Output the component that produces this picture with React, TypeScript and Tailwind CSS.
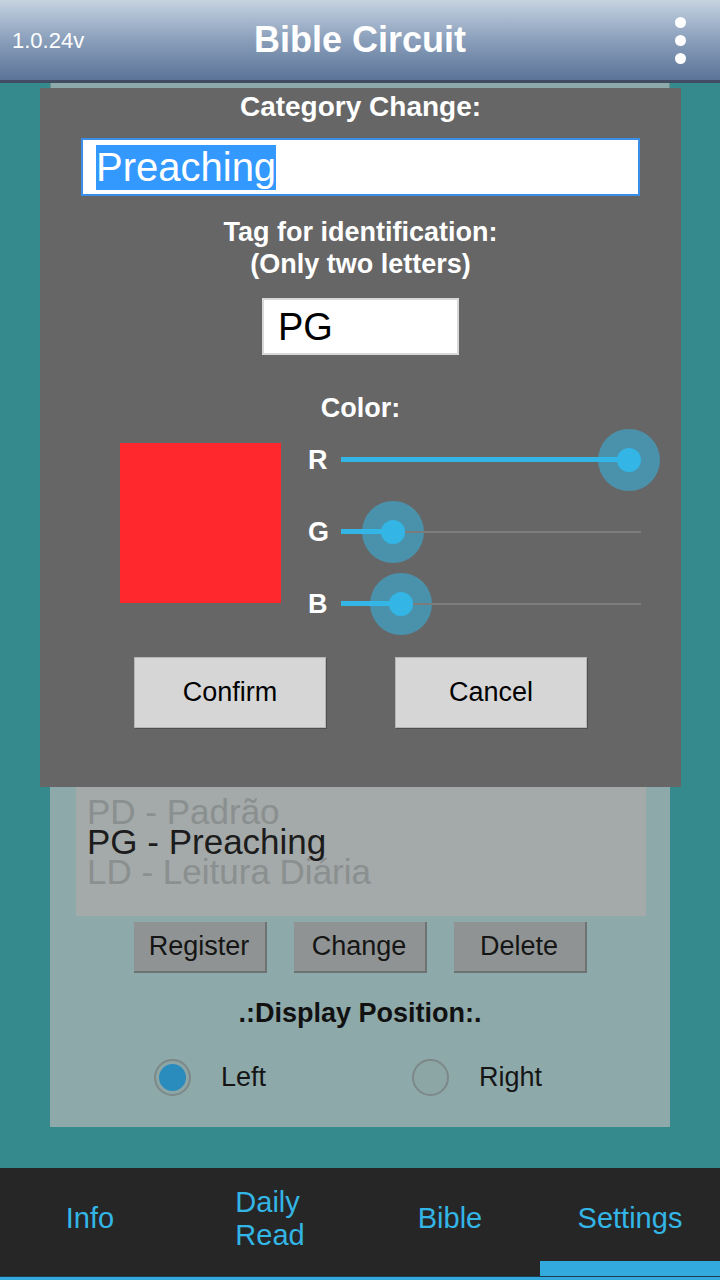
import React from "react";

type SliderProps = { label: string; value: number };

// Holo-style slider: halo behind, then track, then the dot
function ColorSlider(props: SliderProps) {
  return (
    <div className="flex h-[72px] items-center">
      <span className="w-[33px] text-[27px] font-bold text-white">{props.label}</span>
      <div className="relative h-[62px] w-[300px]">
        <div
          className="absolute top-[0px] h-[62px] w-[62px] -translate-x-1/2 rounded-full bg-[#4a92ac]"
          style={{ left: props.value }}
        />
        <div className="absolute left-0 right-0 top-[30px] h-[2px] bg-[#7c7c7c]" />
        <div className="absolute left-0 top-[28px] h-[5px] bg-[#33b5e5]" style={{ width: props.value }} />
        <div
          className="absolute top-[19px] h-[24px] w-[24px] -translate-x-1/2 rounded-full bg-[#33b5e5]"
          style={{ left: props.value }}
        />
      </div>
    </div>
  );
}

function CategoryDialog() {
  return (
    <div className="absolute left-[40px] top-[5px] flex h-[699px] w-[641px] flex-col items-center bg-[#666666] pt-[3px]">
      <p className="text-[28px] font-bold leading-[32px] text-white">Category Change:</p>
      <div className="mt-[15px] flex h-[58px] w-[559px] items-center border-2 border-[#3b8ee8] bg-white px-[13px]">
        <span className="bg-[#3399ff] text-[40px] leading-[45px] text-white">Preaching</span>
      </div>
      <p className="mt-[20px] text-center text-[27px] font-bold leading-[32px] text-white">
        Tag for identification:
        <br />
        (Only two letters)
      </p>
      <div className="mt-[18px] flex h-[57px] w-[197px] items-center border-2 border-[#d8d8d8] bg-white px-[14px]">
        <span className="text-[38px] leading-none text-black">PG</span>
      </div>
      <p className="mt-[37px] text-[27px] font-bold leading-[32px] text-white">Color:</p>
      <div className="flex self-stretch pl-[80px]">
        <div className="mt-[19px] h-[160px] w-[161px] bg-[#ff282d]" />
        <div className="ml-[27px] flex flex-col">
          <ColorSlider label="R" value={288} />
          <ColorSlider label="G" value={52} />
          <ColorSlider label="B" value={60} />
        </div>
      </div>
      <div className="mt-[17px] flex gap-[69px]">
        <button className="h-[71px] w-[192px] border border-[#b5b5b5] bg-[#d6d6d6] text-[27px] text-black shadow-[1px_1px_0_#4f4f4f]">
          Confirm
        </button>
        <button className="h-[71px] w-[192px] border border-[#b5b5b5] bg-[#d6d6d6] text-[27px] text-black shadow-[1px_1px_0_#4f4f4f]">
          Cancel
        </button>
      </div>
    </div>
  );
}

function PanelButton(props: { children: React.ReactNode }) {
  return (
    <button className="h-[51px] w-[133px] border-b-2 border-r-2 border-[#6d7272] bg-[#8f9393] text-[27px] text-[#151515]">
      {props.children}
    </button>
  );
}

function Radio(props: { label: string; checked: boolean }) {
  return (
    <div className="flex w-[261px] items-center gap-[30px]">
      <div className="flex h-[37px] w-[37px] items-center justify-center rounded-full border-2 border-[#7d8888] bg-[#8ca6a6]">
        {props.checked && <div className="h-[27px] w-[27px] rounded-full bg-[#2a8bbd]" />}
      </div>
      <span className="text-[27px] text-[#151515]">{props.label}</span>
    </div>
  );
}

export default function App() {
  const tabs = ["Info", "Daily\nRead", "Bible", "Settings"];
  return (
    <div className="flex h-[1280px] w-[720px] flex-col overflow-hidden bg-[#358a8e] font-['Liberation_Sans',Arial,sans-serif]">
      <header className="flex h-[83px] shrink-0 items-center border-b-[3px] border-[#3f4c62] bg-gradient-to-b from-[#c6d3e1] via-[#8a9fbb] to-[#5b7397] px-[12px]">
        <span className="w-[150px] text-[22px] text-white">1.0.24v</span>
        <h1 className="flex-1 text-center text-[36px] font-bold text-white">Bible Circuit</h1>
        <div className="flex w-[150px] flex-col items-end gap-[7px] pr-[22px]">
          <span className="h-[11px] w-[11px] rounded-full bg-white" />
          <span className="h-[11px] w-[11px] rounded-full bg-white" />
          <span className="h-[11px] w-[11px] rounded-full bg-white" />
        </div>
      </header>

      <main className="relative flex-1">
        <section className="ml-[50px] flex h-[1044px] w-[620px] flex-col bg-[#8ea9a9]">
          <div className="h-[5px] shrink-0 border-x border-[#6f8c8c]" />
          <div className="ml-[26px] mt-[699px] flex h-[129px] w-[570px] flex-col bg-[#a4a9a9] px-[11px] pt-[10px] text-[35px] leading-[30px]">
            <span className="text-[#8a8f8f]">PD - Padrão</span>
            <span className="text-[#1c1c1c]">PG - Preaching</span>
            <span className="text-[#8a8f8f]">LD - Leitura Diária</span>
          </div>
          <div className="mt-[6px] flex justify-center gap-[27px]">
            <PanelButton>Register</PanelButton>
            <PanelButton>Change</PanelButton>
            <PanelButton>Delete</PanelButton>
          </div>
          <p className="mt-[24px] text-center text-[27px] font-bold leading-[32px] text-[#111]">.:Display Position:.</p>
          <div className="mt-[28px] flex pl-[104px]">
            <Radio label="Left" checked />
            <Radio label="Right" checked={false} />
          </div>
        </section>
        <CategoryDialog />
      </main>

      <nav className="flex h-[112px] shrink-0 flex-col bg-[#262626]">
        <div className="grid flex-1 grid-cols-4 pt-[8px]">
          {tabs.map((t) => (
            <div key={t} className="flex items-center justify-center">
              <span className="whitespace-pre-line text-[29px] leading-[33px] text-[#33b5e5]">{t}</span>
            </div>
          ))}
        </div>
        <div className="grid h-[15px] grid-cols-4">
          <div />
          <div />
          <div />
          <div className="bg-[#33aadd]" />
        </div>
        <div className="h-[1px] bg-[#1f3f4f]" />
        <div className="h-[3px] bg-[#33aadd]" />
      </nav>
    </div>
  );
}
